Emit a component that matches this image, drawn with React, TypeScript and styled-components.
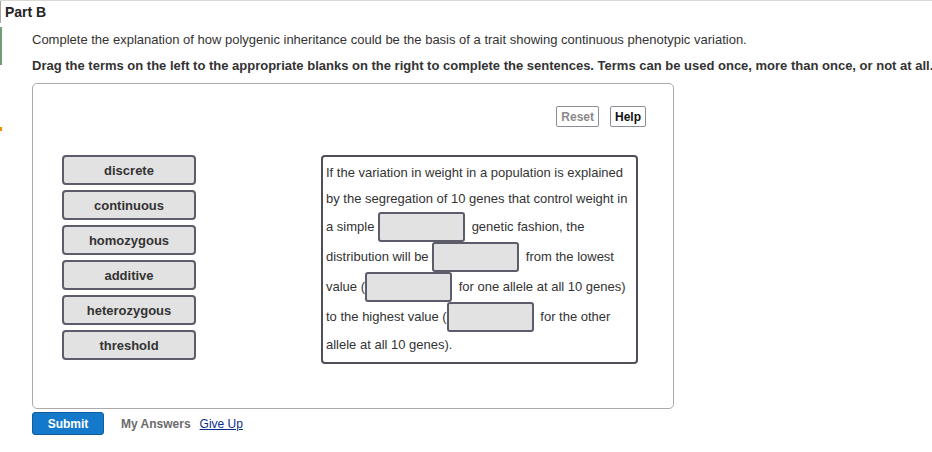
import React from "react";
import styled, { createGlobalStyle } from "styled-components";

const Global = createGlobalStyle`
  html, body { margin: 0; padding: 0; background: #fff; }
  body { font-family: "Liberation Sans", Arial, sans-serif; color: #333; font-size: 13px; }
`;

const Page = styled.div`
  position: relative;
  width: 932px;
  height: 452px;
  border-top: 1px solid #d3dbd3;
  box-sizing: border-box;
  overflow: hidden;
`;

const Header = styled.div`
  height: 22px;
  border-left: 1px solid #a8a8a8;
  padding-left: 4px;
  display: flex;
  align-items: center;
  font-size: 14px;
  font-weight: bold;
  color: #222;
`;

const Intro = styled.div`
  position: relative;
  padding-left: 32px;
  display: flex;
  flex-direction: column;

  &::before {
    content: "";
    position: absolute;
    left: 0;
    top: 4px;
    width: 2px;
    height: 38px;
    background: #6f9d78;
  }
`;

const Lead = styled.div`
  height: 30px;
  line-height: 34px;
  font-size: 13px;
  color: #333;
  white-space: nowrap;
`;

const Instruction = styled.div`
  height: 26px;
  line-height: 26px;
  font-size: 13px;
  font-weight: bold;
  color: #333;
  white-space: nowrap;
`;

const Marker = styled.div`
  position: absolute;
  left: 0;
  top: 126px;
  width: 2px;
  height: 4px;
  background: #f08a00;
`;

const Panel = styled.div`
  margin: 4px 0 0 32px;
  width: 642px;
  height: 326px;
  box-sizing: border-box;
  border: 1px solid #aaa;
  border-radius: 5px;
  padding: 22px 27px 0 29px;
`;

const Tools = styled.div`
  display: flex;
  justify-content: flex-end;
  gap: 11px;
`;

const ToolButton = styled.button<{ $muted?: boolean }>`
  height: 21px;
  padding: 0 4px;
  border: 1px solid #8a8f96;
  border-radius: 2px;
  background: #fff;
  font-family: "Liberation Sans", Arial, sans-serif;
  font-size: 12px;
  font-weight: bold;
  color: ${(p) => (p.$muted ? "#8a8a8a" : "#111")};
`;

const Work = styled.div`
  display: flex;
  gap: 125px;
  margin-top: 28px;
`;

const Terms = styled.div`
  display: flex;
  flex-direction: column;
  gap: 5px;
`;

const Term = styled.div`
  width: 134px;
  height: 30px;
  box-sizing: border-box;
  border: 2px solid #5c5c6a;
  border-radius: 4px;
  background: #e2e2e2;
  display: flex;
  align-items: center;
  justify-content: center;
  font-size: 13px;
  font-weight: bold;
  color: #333;
`;

const Sentence = styled.div`
  width: 317px;
  box-sizing: border-box;
  border: 2px solid #4f4f5a;
  border-radius: 4px;
  padding: 3px 3px 4px 3px;
  font-size: 13px;
  line-height: 26px;
  color: #333;
  white-space: nowrap;
`;

const Blank = styled.span`
  display: inline-block;
  width: 87px;
  height: 30px;
  box-sizing: border-box;
  border: 2px solid #5c5c6a;
  border-radius: 3px;
  background: #e2e2e2;
  vertical-align: -10.6px;
  margin: 0 3px 0 0;
`;

const Footer = styled.div`
  display: flex;
  align-items: center;
  margin: 3px 0 0 32px;
  gap: 17px;
`;

const Submit = styled.button`
  width: 72px;
  height: 23px;
  border: 1px solid #0f5c9e;
  border-radius: 3px;
  background: #1479cb;
  color: #fff;
  font-family: "Liberation Sans", Arial, sans-serif;
  font-size: 12px;
  font-weight: bold;
`;

const MyAnswers = styled.span`
  font-size: 12px;
  font-weight: bold;
  color: #6b6b6b;
`;

const GiveUp = styled.a`
  font-size: 12px;
  color: #0b2d8a;
  text-decoration: underline;
  margin-left: -8px;
`;

const terms = ["discrete", "continuous", "homozygous", "additive", "heterozygous", "threshold"];

export default function App() {
  return (
    <Page>
      <Global />
      <Header>Part B</Header>
      <Intro>
        <Lead>Complete the explanation of how polygenic inheritance could be the basis of a trait showing continuous phenotypic variation.</Lead>
        <Instruction>
          Drag the terms on the left to the appropriate blanks on the right to complete the sentences. Terms can be used once, more than once, or not at all.
        </Instruction>
      </Intro>
      <Marker />
      <Panel>
        <Tools>
          <ToolButton $muted>Reset</ToolButton>
          <ToolButton>Help</ToolButton>
        </Tools>
        <Work>
          <Terms>
            {terms.map((t) => (
              <Term key={t}>{t}</Term>
            ))}
          </Terms>
          <Sentence>
            If the variation in weight in a population is explained
            <br />
            by the segregation of 10 genes that control weight in
            <br />
            a simple <Blank /> genetic fashion, the
            <br />
            distribution will be <Blank /> from the lowest
            <br />
            value (<Blank /> for one allele at all 10 genes)
            <br />
            to the highest value (<Blank /> for the other
            <br />
            allele at all 10 genes).
          </Sentence>
        </Work>
      </Panel>
      <Footer>
        <Submit>Submit</Submit>
        <MyAnswers>My Answers</MyAnswers>
        <GiveUp href="#">Give Up</GiveUp>
      </Footer>
    </Page>
  );
}
